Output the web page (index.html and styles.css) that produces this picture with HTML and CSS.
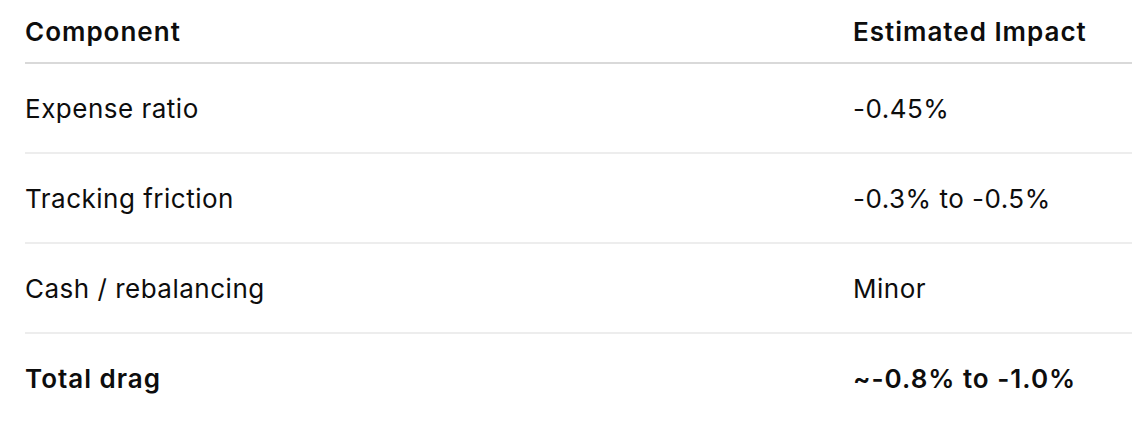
FILE: index.html
```html
<!DOCTYPE html>
<html lang="en">
<head>
    <meta charset="UTF-8">
    <meta name="viewport" content="width=device-width, initial-scale=1.0">
    <title>Drag breakdown</title>
    <link rel="stylesheet" href="styles.css">
</head>
<body>
    <table class="impact-table">
        <thead>
            <tr>
                <th class="col-name">Component</th>
                <th>Estimated Impact</th>
            </tr>
        </thead>
        <tbody>
            <tr>
                <td>Expense ratio</td>
                <td>-0.45%</td>
            </tr>
            <tr>
                <td>Tracking friction</td>
                <td>-0.3% to -0.5%</td>
            </tr>
            <tr>
                <td>Cash / rebalancing</td>
                <td>Minor</td>
            </tr>
            <tr class="total">
                <td>Total drag</td>
                <td>~-0.8% to -1.0%</td>
            </tr>
        </tbody>
    </table>
</body>
</html>
```

FILE: styles.css
```css
body{
    margin: 0;
    background-color: #ffffff;
    font-family: 'Inter', 'Liberation Sans', sans-serif;
    color: #0d0d0d;
}

.impact-table{
    border-collapse: collapse;
    margin-left: 25px;
    width: 1107px;
    font-size: 26px;
    letter-spacing: 0.5px;
}

.impact-table th{
    text-align: left;
    font-weight: 600;
    letter-spacing: 1px;
    padding: 19px 0 17px;
    line-height: 26px;
    border-bottom: 2px solid #d9d9d9;
}

.impact-table .col-name{
    width: 828px;
}

.impact-table td{
    padding: 32px 0 30px;
    line-height: 26px;
    border-bottom: 2px solid #ededed;
}

.impact-table .total td{
    font-weight: 600;
    letter-spacing: 1px;
    border-bottom: 0;
}
```
